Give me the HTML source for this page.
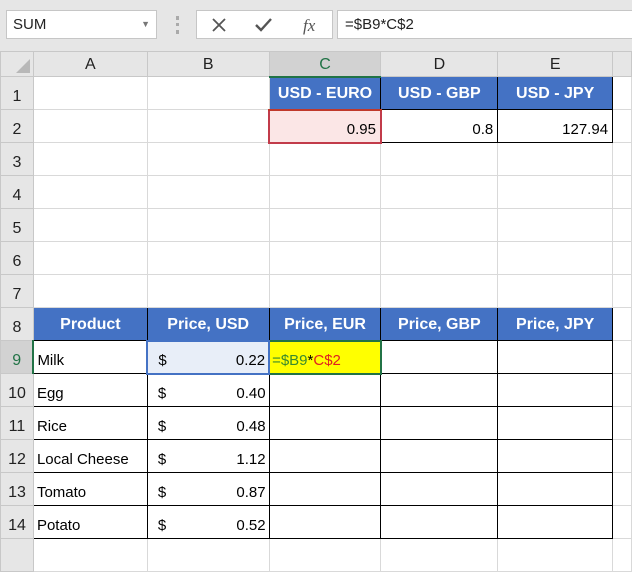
<!DOCTYPE html>
<html><head><style>
body{margin:0;width:632px;height:551px;overflow:hidden;background:#fff;font-family:"Liberation Sans",Calibri,sans-serif;position:relative}
.top{position:absolute;left:0;top:0;width:632px;height:51px;background:#e6e6e6}
.nb{position:absolute;left:6px;top:10px;width:151px;height:29px;background:#fff;border:1px solid #c6c6c6;box-sizing:border-box;font-size:15px;line-height:27px;padding-left:6px;color:#222}
.fb{position:absolute;left:196px;top:10px;width:137px;height:29px;background:#fff;border:1px solid #c6c6c6;box-sizing:border-box}
.fx{position:absolute;left:337px;top:10px;width:295px;height:29px;background:#fff;border:1px solid #c6c6c6;border-right:none;box-sizing:border-box;font-size:15px;line-height:27px;padding-left:7px;color:#222}
table{position:absolute;left:0;top:51px;border-collapse:collapse;table-layout:fixed}
td{border:1px solid #d9d9d9;height:33px;padding:0 3px 4px 3px;font-size:15px;white-space:nowrap;overflow:hidden;box-sizing:border-box;vertical-align:bottom}
tr.h td{height:25px;background:#e6e6e6;text-align:center;font-size:16px;color:#222;border-color:#c8c8c8;padding:0 0 2px 0}
td.r{background:#e6e6e6;text-align:center;font-size:16px;color:#222;border-color:#c8c8c8;padding-bottom:3px}
.bl{background:#4472c4;color:#fff;font-weight:bold;text-align:center;font-size:16px;border:1px solid #000;padding-bottom:6px}
.k{border:1px solid #000}
.n{text-align:right;padding-right:4px}
.d{padding-left:10px}
</style></head><body>
<div class="top"></div>
<div class="nb">SUM<span style="position:absolute;right:6px;top:0;font-size:9px;color:#777">▼</span></div>
<div style="position:absolute;left:176px;top:16px;width:3px;height:18px;border-left:3px dotted #aaa"></div>
<div class="fb">
<svg width="137" height="29" style="position:absolute;left:0;top:0"><path d="M16 8 L28 20 M28 8 L16 20" stroke="#555" stroke-width="1.8"/><path d="M59 14 L64 19 L74 8" stroke="#555" stroke-width="2.4" fill="none"/><text x="106" y="20" font-family="Liberation Serif" font-style="italic" font-size="17" fill="#555">fx</text></svg></div>
<div class="fx">=$B9*C$2</div>
<table>
<colgroup><col style="width:33px"><col style="width:114px"><col style="width:122px"><col style="width:112px"><col style="width:117px"><col style="width:115px"><col style="width:19px"></colgroup>
<tr class="h"><td style="position:relative"><svg width="14" height="14" style="position:absolute;right:3px;bottom:3px"><path d="M14 0 L14 14 L0 14Z" fill="#b8b8b8"/></svg></td><td>A</td><td>B</td><td style="background:#d2d2d2;color:#217346;border-bottom:2px solid #217346">C</td><td>D</td><td>E</td><td></td></tr>
<tr><td class="r">1</td><td></td><td></td><td class="bl" style="border-bottom:2px solid #c0392b">USD - EURO</td><td class="bl">USD - GBP</td><td class="bl">USD - JPY</td><td></td></tr>
<tr><td class="r">2</td><td></td><td></td><td class="n" style="background:#fbe6e6;border:2px solid #c23b4a">0.95</td><td class="k n">0.8</td><td class="k n">127.94</td><td></td></tr>
<tr><td class="r">3</td><td></td><td></td><td></td><td></td><td></td><td></td></tr>
<tr><td class="r">4</td><td></td><td></td><td></td><td></td><td></td><td></td></tr>
<tr><td class="r">5</td><td></td><td></td><td></td><td></td><td></td><td></td></tr>
<tr><td class="r">6</td><td></td><td></td><td></td><td></td><td></td><td></td></tr>
<tr><td class="r">7</td><td></td><td></td><td></td><td></td><td></td><td></td></tr>
<tr><td class="r">8</td><td class="bl">Product</td><td class="bl">Price, USD</td><td class="bl">Price, EUR</td><td class="bl">Price, GBP</td><td class="bl">Price, JPY</td><td></td></tr>
<tr><td class="r" style="background:#d2d2d2;color:#217346;border-right:2px solid #217346">9</td><td class="k">Milk</td><td class="k d" style="background:#e8eef8;border:2px solid #4472c4">$<span style="float:right">0.22</span></td><td style="background:#ffff00;border:2px solid #217346;padding-left:2px"><span style="color:#3a8a2e">=$B9</span>*<span style="color:#e02020">C$2</span></td><td class="k"></td><td class="k"></td><td></td></tr>
<tr><td class="r">10</td><td class="k">Egg</td><td class="k d">$<span style="float:right">0.40</span></td><td class="k"></td><td class="k"></td><td class="k"></td><td></td></tr>
<tr><td class="r">11</td><td class="k">Rice</td><td class="k d">$<span style="float:right">0.48</span></td><td class="k"></td><td class="k"></td><td class="k"></td><td></td></tr>
<tr><td class="r">12</td><td class="k">Local Cheese</td><td class="k d">$<span style="float:right">1.12</span></td><td class="k"></td><td class="k"></td><td class="k"></td><td></td></tr>
<tr><td class="r">13</td><td class="k">Tomato</td><td class="k d">$<span style="float:right">0.87</span></td><td class="k"></td><td class="k"></td><td class="k"></td><td></td></tr>
<tr><td class="r">14</td><td class="k">Potato</td><td class="k d">$<span style="float:right">0.52</span></td><td class="k"></td><td class="k"></td><td class="k"></td><td></td></tr>
<tr><td class="r"></td><td></td><td></td><td></td><td></td><td></td><td></td></tr>
</table>
</body></html>
